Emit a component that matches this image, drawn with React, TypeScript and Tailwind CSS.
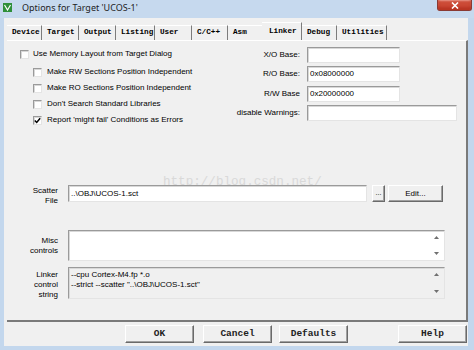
import React from "react";

const sans = "font-['Liberation_Sans',Arial,sans-serif]";
const mono = "font-['Liberation_Mono','Courier_New',monospace]";
const sunken =
  "border border-t-[#9a9a9a] border-l-[#9a9a9a] border-r-[#e4e4e4] border-b-[#e4e4e4] shadow-[inset_1px_1px_0_#d8d8d8]";
const raised =
  "border border-t-white border-l-white border-r-[#6a6a6a] border-b-[#6a6a6a] shadow-[inset_-1px_-1px_0_#a0a0a0]";

const tabs = [
  { label: "Device", w: "w-[35px]" },
  { label: "Target", w: "w-[37px]" },
  { label: "Output", w: "w-[37px]" },
  { label: "Listing", w: "w-[39px]" },
  { label: "User", w: "w-[37px]" },
  { label: "C/C++", w: "w-[36px]" },
  { label: "Asm", w: "w-[34px]", noSep: true },
  { label: "Linker", w: "w-[40px]", active: true },
  { label: "Debug", w: "w-[35px]" },
  { label: "Utilities", w: "w-[50px]" },
];

function Check({ checked }: { checked?: boolean }) {
  return (
    <span className={`w-[9px] h-[9px] bg-white shrink-0 flex items-center justify-center ${sunken}`}>
      {checked && (
        <svg width="7" height="7" viewBox="0 0 7 7">
          <path d="M0.8 3.4 L2.7 5.4 L6.2 1.2" stroke="#000" strokeWidth="1.5" fill="none" />
        </svg>
      )}
    </span>
  );
}

function Arrows() {
  return (
    <div className="w-[15px] flex flex-col items-center justify-between py-[5px]">
      <svg width="5" height="3" viewBox="0 0 5 3">
        <path d="M0 3 L2.5 0 L5 3 Z" fill="#707070" />
      </svg>
      <svg width="5" height="3" viewBox="0 0 5 3">
        <path d="M0 0 L2.5 3 L5 0 Z" fill="#707070" />
      </svg>
    </div>
  );
}

function Field({ label, value, w }: { label: string; value?: string; w: string }) {
  return (
    <div className="flex items-center h-[16px]">
      <div className="w-[66px] text-right pr-[1px] whitespace-nowrap">{label}</div>
      <div className={`ml-[6px] h-[16px] bg-white ${sunken} ${w} pl-[2px] flex items-center`}>{value}</div>
    </div>
  );
}

export default function App() {
  return (
    <div className={`w-[474px] h-[350px] bg-[#c3d7ed] flex flex-col overflow-hidden ${sans} text-[8px] text-black`}>
      {/* title bar */}
      <div className="h-[18px] flex items-start bg-[#c6d9ee]">
        <div className="mt-[3px] ml-[3px] w-[9px] h-[9px] bg-[#2f8f3a] flex items-center justify-center">
          <svg width="7" height="7" viewBox="0 0 7 7">
            <path d="M0.5 1 L3.5 6 L6.5 1" stroke="#fff" strokeWidth="1.2" fill="none" />
          </svg>
        </div>
        <div className="ml-[10px] mt-[2px] font-['Noto_Sans',sans-serif] text-[9px] leading-[11px] text-[#1e1e1e]">
          Options for Target 'UCOS-1'
        </div>
        <div className="ml-auto mr-[2px] w-[35px] h-[11px] rounded-b-[3px] border border-t-0 border-[#8a3a33] bg-[#cc4a36] shadow-[inset_0_-3px_3px_#b83422,inset_0_1px_2px_#e89a8c] flex items-center justify-center">
          <svg width="8" height="7" viewBox="0 0 8 7">
            <path d="M1 0.5 L7 6.5 M7 0.5 L1 6.5" stroke="#fff" strokeWidth="1.6" />
          </svg>
        </div>
      </div>

      {/* client */}
      <div className="ml-[4px] mr-[6px] h-[328px] bg-[#f0f0f0] pt-[4px] pl-[3px] flex flex-col">
        {/* tabs */}
        <div className={`h-[18px] flex items-end ${mono} font-bold text-[7.7px]`}>
          {tabs.map((t) =>
            t.active ? (
              <div
                key={t.label}
                className={`${t.w} h-[18px] pl-[7px] pt-[3px] border-t border-t-white border-r border-r-[#7c7c7c] leading-[10px]`}
              >
                {t.label}
              </div>
            ) : (
              <div
                key={t.label}
                className={`${t.w} h-[15px] pl-[5px] flex items-center border-t border-t-white ${
                  t.noSep ? "" : "border-r border-r-[#7c7c7c]"
                }`}
              >
                {t.label}
              </div>
            )
          )}
        </div>

        {/* panel */}
        <div className="relative h-[282px] w-[461px] border-t border-t-white border-r-2 border-r-[#7a7a7a] border-b-2 border-b-[#7a7a7a] flex flex-col">
          {/* top section */}
          <div className="h-[144px] pt-[6px] flex">
            <div className="w-[215px] ml-[13px] flex flex-col">
              <div className="h-[14px] flex items-center">
                <Check />
                <span className="ml-[4px]">Use Memory Layout from Target Dialog</span>
              </div>
              <div className="h-[14px] mt-[4px] pl-[13px] flex items-center">
                <Check />
                <span className="ml-[5px]">Make RW Sections Position Independent</span>
              </div>
              <div className="h-[14px] mt-[2px] pl-[13px] flex items-center">
                <Check />
                <span className="ml-[5px]">Make RO Sections Position Independent</span>
              </div>
              <div className="h-[14px] mt-[2px] pl-[13px] flex items-center">
                <Check />
                <span className="ml-[5px]">Don't Search Standard Libraries</span>
              </div>
              <div className="h-[14px] mt-[2px] pl-[13px] flex items-center">
                <Check checked />
                <span className="ml-[5px]">Report 'might fail' Conditions as Errors</span>
              </div>
            </div>
            <div className="flex flex-col">
              <Field label="X/O Base:" w="w-[93px]" />
              <div className="mt-[3px]">
                <Field label="R/O Base:" value="0x08000000" w="w-[93px]" />
              </div>
              <div className="mt-[4px]">
                <Field label="R/W Base" value="0x20000000" w="w-[93px]" />
              </div>
              <div className="mt-[3px]">
                <Field label="disable Warnings:" w="w-[150px]" />
              </div>
            </div>
          </div>

          {/* watermark */}
          <div className={`absolute left-[156px] top-[135px] ${mono} text-[12.6px] leading-[13px] text-[#d9d9d9]`}>
            http://blog.csdn.net/
          </div>

          {/* scatter */}
          <div className="relative flex h-[17px]">
            <div className="w-[51px] text-right leading-[10px] pt-[1px]">
              Scatter
              <br />
              File
            </div>
            <div className={`ml-[10px] w-[299px] h-[17px] bg-white ${sunken} pl-[2px] flex items-center`}>
              {"..\\OBJ\\UCOS-1.sct"}
            </div>
            <div className={`ml-[5px] w-[13px] h-[17px] ${raised} flex items-center justify-center text-[7px]`}>
              ...
            </div>
            <div className={`ml-[3px] w-[55px] h-[17px] ${raised} flex items-center justify-center`}>Edit...</div>
          </div>

          {/* misc */}
          <div className="flex mt-[28px] h-[31px]">
            <div className="w-[51px] text-right leading-[10px] pt-[6px]">
              Misc
              <br />
              controls
            </div>
            <div className={`ml-[10px] w-[377px] h-[31px] bg-white ${sunken} flex justify-end`}>
              <Arrows />
            </div>
          </div>

          {/* linker control string */}
          <div className="flex mt-[6px] h-[32px]">
            <div className="w-[51px] text-right leading-[10px] pt-[3px]">
              Linker
              <br />
              control
              <br />
              string
            </div>
            <div className={`ml-[10px] w-[377px] h-[32px] bg-[#f0f0f0] ${sunken} flex`}>
              <div className="flex-1 pl-[2px] pt-[2px] leading-[10px]">
                --cpu Cortex-M4.fp *.o
                <br />
                {'--strict --scatter "..\\OBJ\\UCOS-1.sct"'}
              </div>
              <Arrows />
            </div>
          </div>
        </div>

        {/* buttons */}
        <div className={`pt-[3px] flex ${mono} font-bold text-[9.5px] text-[#222]`}>
          <div className={`ml-[118px] w-[69px] h-[18px] ${raised} flex items-center justify-center`}>OK</div>
          <div className={`ml-[9px] w-[69px] h-[18px] ${raised} flex items-center justify-center`}>Cancel</div>
          <div className={`ml-[7px] w-[69px] h-[18px] ${raised} flex items-center justify-center`}>Defaults</div>
          <div className={`ml-[50px] w-[69px] h-[18px] ${raised} flex items-center justify-center`}>Help</div>
        </div>
      </div>
      <div className="flex-1" />
    </div>
  );
}
